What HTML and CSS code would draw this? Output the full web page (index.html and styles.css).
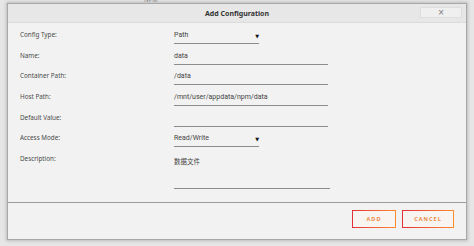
FILE: index.html
```html
<!DOCTYPE html>
<html lang="en">

<head>
    <meta charset="UTF-8">
    <title>Add Configuration</title>
    <link rel="stylesheet" href="styles.css">
</head>

<body>
    <div class="backdrop-label">NPM</div>

    <div class="dialog">
        <div class="titlebar">
            <div></div>
            <div class="title">Add Configuration</div>
            <button class="close" type="button">&times;</button>
        </div>

        <form class="config-form">
            <div class="row">
                <label>Config Type:</label>
                <div class="field select short"><span>Path</span><span class="arrow">&#9660;</span></div>
            </div>
            <div class="row">
                <label>Name:</label>
                <div class="field"><span>data</span></div>
            </div>
            <div class="row">
                <label>Container Path:</label>
                <div class="field"><span>/data</span></div>
            </div>
            <div class="row">
                <label>Host Path:</label>
                <div class="field"><span>/mnt/user/appdata/npm/data</span></div>
            </div>
            <div class="row">
                <label>Default Value:</label>
                <div class="field"><span></span></div>
            </div>
            <div class="row">
                <label>Access Mode:</label>
                <div class="field select short"><span>Read/Write</span><span class="arrow">&#9660;</span></div>
            </div>
            <div class="row row-tall">
                <label>Description:</label>
                <div class="field area"><span class="cjk">数据文件</span></div>
            </div>
        </form>

        <div class="footer">
            <button class="btn" type="button">ADD</button>
            <button class="btn btn-wide" type="button">CANCEL</button>
        </div>
    </div>
</body>

</html>
```

FILE: styles.css
```css
* {
    margin: 0;
    padding: 0;
    box-sizing: border-box;
}

body {
    width: 474px;
    height: 246px;
    overflow: hidden;
    background: #e6e6e6;
    font-family: "Noto Sans", "Open Sans", sans-serif;
    color: #555;
    padding: 3px 7px 0 7px;
}

.backdrop-label {
    position: absolute;
    left: 144px;
    top: -3px;
    font-size: 6px;
    line-height: 6px;
    color: #888;
}

.dialog {
    width: 460px;
    height: 237px;
    background: #f2f2f2;
    border: 1px solid #a8a8a8;
    box-shadow: 0 0 3px 1px rgba(0, 0, 0, 0.18);
    display: flex;
    flex-direction: column;
}

.titlebar {
    height: 19px;
    background: #e7e7e7;
    border-bottom: 1px solid #dcdcdc;
    display: grid;
    grid-template-columns: 1fr auto 1fr;
    align-items: center;
}

.title {
    font-size: 7px;
    font-weight: bold;
    color: #333;
}

.close {
    justify-self: end;
    width: 42px;
    height: 11px;
    margin-right: 4px;
    margin-top: -1px;
    border: 1px solid #dedede;
    background: #efefef;
    color: #777;
    font-size: 8px;
    line-height: 8px;
    font-family: "DejaVu Sans", sans-serif;
}

.config-form {
    padding: 4px 0 0 12px;
    display: flex;
    flex-direction: column;
    flex: 1;
}

.row {
    display: grid;
    grid-template-columns: 154px 1fr;
    height: 20.7px;
}

.row label {
    font-size: 6.3px;
    color: #4a4a4a;
    padding-top: 3px;
}

.row-tall {
    height: 42px;
}

.field {
    width: 154px;
    height: 17px;
    border-bottom: 1px solid #8c8c8c;
    font-family: Roboto, "Noto Sans", sans-serif;
    font-size: 7px;
    color: #444;
    padding-top: 4px;
    display: flex;
    justify-content: space-between;
}

.field.short {
    width: 85px;
}

.arrow {
    font-family: "DejaVu Sans", sans-serif;
    font-size: 5px;
    color: #111;
    padding-top: 2px;
    padding-right: 0;
}

.field.area {
    width: 156px;
    height: 38px;
    padding-top: 5px;
}

.cjk {
    font-family: "Noto Sans CJK SC", sans-serif;
    font-size: 6.5px;
}

.footer {
    height: 37px;
    border-top: 1px solid #9a9a9a;
    display: flex;
    justify-content: flex-end;
    align-items: flex-start;
    gap: 6px;
    padding: 7px 12px 0 0;
}

.btn {
    width: 44px;
    height: 18px;
    background: #f7f4f2;
    border: 1px solid;
    border-image: linear-gradient(90deg, #e22f3a, #ff8c2f) 1;
    color: #f08a45;
    font-family: "Noto Sans", sans-serif;
    font-size: 5.5px;
    font-weight: bold;
    letter-spacing: 1px;
}

.btn-wide {
    width: 52px;
}
```
